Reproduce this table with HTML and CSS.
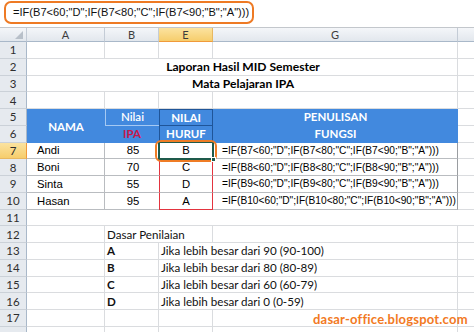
FILE: index.html
```html
<!DOCTYPE html>
<html>
<head>
<meta charset="utf-8">
<link rel="stylesheet" href="styles.css">
</head>
<body>
<div class="fbar"><div class="fbox">=IF(B7&lt;60;"D";IF(B7&lt;80;"C";IF(B7&lt;90;"B";"A")))</div></div>
<div class="sheet">
  <div class="ch corner"><span class="tri"></span></div><div class="ch">A</div><div class="ch">B</div><div class="ch on">E</div><div class="ch">G</div><div class="ch last"></div>

  <div class="rh">1</div><div class="c"></div><div class="c"></div><div class="c"></div><div class="c"></div><div class="c h"></div>
  <div class="rh">2</div><div class="c title">Laporan Hasil MID Semester</div><div class="c h"></div>
  <div class="rh">3</div><div class="c title">Mata Pelajaran IPA</div><div class="c h"></div>
  <div class="rh">4</div><div class="c"></div><div class="c"></div><div class="c"></div><div class="c"></div><div class="c h"></div>

  <div class="rh">5</div><div class="c blue nama">NAMA</div><div class="c blue b5">Nilai</div><div class="c blue e5">NILAI</div><div class="c blue">PENULISAN</div><div class="c h"></div>
  <div class="rh">6</div><div class="c blue b6">IPA</div><div class="c blue e6">HURUF</div><div class="c blue">FUNGSI</div><div class="c h"></div>

  <div class="rh on">7</div><div class="c d name">Andi</div><div class="c d num">85</div><div class="c d grade sel"><span class="handle"></span>B</div><div class="c d fx">=IF(B7&lt;60;"D";IF(B7&lt;80;"C";IF(B7&lt;90;"B";"A")))</div><div class="c h"></div>
  <div class="rh">8</div><div class="c d name">Boni</div><div class="c d num">70</div><div class="c d grade red">C</div><div class="c d fx">=IF(B8&lt;60;"D";IF(B8&lt;80;"C";IF(B8&lt;90;"B";"A")))</div><div class="c h"></div>
  <div class="rh">9</div><div class="c d name">Sinta</div><div class="c d num">55</div><div class="c d grade red">D</div><div class="c d fx">=IF(B9&lt;60;"D";IF(B9&lt;80;"C";IF(B9&lt;90;"B";"A")))</div><div class="c h"></div>
  <div class="rh">10</div><div class="c d name">Hasan</div><div class="c d num">95</div><div class="c d grade red last-red">A</div><div class="c d fx">=IF(B10&lt;60;"D";IF(B10&lt;80;"C";IF(B10&lt;90;"B";"A")))</div><div class="c h"></div>

  <div class="rh">11</div><div class="c blank"></div><div class="c h"></div>
  <div class="rh">12</div><div class="c"></div><div class="c cal span2">Dasar Penilaian</div><div class="c"></div><div class="c h"></div>
  <div class="rh">13</div><div class="c"></div><div class="c cal bold">A</div><div class="c cal span2">Jika lebih besar dari 90 (90-100)</div><div class="c h"></div>
  <div class="rh">14</div><div class="c"></div><div class="c cal bold">B</div><div class="c cal span2">Jika lebih besar dari 80 (80-89)</div><div class="c h"></div>
  <div class="rh">15</div><div class="c"></div><div class="c cal bold">C</div><div class="c cal span2">Jika lebih besar dari 60 (60-79)</div><div class="c h"></div>
  <div class="rh">16</div><div class="c"></div><div class="c cal bold">D</div><div class="c cal span2">Jika lebih besar dari 0 (0-59)</div><div class="c h"></div>
  <div class="rh">17</div><div class="c"></div><div class="c"></div><div class="c"></div><div class="c"></div><div class="c h"></div>
  <div class="rh"></div><div class="c"></div><div class="c"></div><div class="c"></div><div class="c"></div><div class="c h"></div>
</div>
<div class="ring"></div>
<div class="watermark">dasar-office.blogspot.com</div>
</body>
</html>
```

FILE: styles.css
```css
* { box-sizing: border-box; margin: 0; padding: 0; }
html, body { width: 474px; height: 332px; overflow: hidden; background: #fff; }
body { position: relative; font-family: "Liberation Sans", Arial, sans-serif; color: #000; }

.fbar { height: 28px; border-bottom: 1px solid #c3c7cc; padding: 1px 0 0 4px; }
.fbox {
  width: 250px; height: 23px;
  border: 2px solid #ee7a24; border-radius: 7px;
  font-size: 11.1px; line-height: 19px; padding-left: 7px;
  white-space: nowrap; color: #111;
}

.sheet {
  display: grid;
  grid-template-columns: 27px 78px 54px 54px 245px 16px;
  grid-template-rows: 14px repeat(18, 16.75px);
}

.ch {
  background: linear-gradient(#f4f6f9, #e2e7ed);
  border-right: 1px solid #c4ccd6;
  border-bottom: 1px solid #a9b8c9;
  display: flex; align-items: center; justify-content: center;
  font-family: Lato, "Open Sans", sans-serif; font-size: 11px; color: #3c3c3c;
}
.ch.on { background: linear-gradient(#fbe3a0, #f6cd6c); border-bottom-color: #f09a3a; border-right-color: #e8b860; }
.ch.last { border-right: none; }
.corner { position: relative; }
.tri {
  position: absolute; right: 3px; bottom: 2px;
  width: 0; height: 0;
  border-left: 8px solid transparent; border-bottom: 8px solid #b8c0c9;
}

.rh {
  background: #e6eaef;
  border-right: 1px solid #a9b8c9;
  border-bottom: 1px solid #cbd1d8;
  display: flex; align-items: center; justify-content: center;
  font-family: Lato, "Open Sans", sans-serif; font-size: 11.5px; color: #2e2e2e;
}
.rh.on { background: linear-gradient(#fbe3a0, #f6cd6c); border-right-color: #f09a3a; border-bottom-color: #e8b860; }

.c {
  border-right: 1px solid #dadcdf;
  border-bottom: 1px solid #dadcdf;
  display: flex; align-items: center;
  white-space: nowrap; overflow: hidden;
  font-size: 11px;
}
.c.h { border-right: none; }

.title {
  grid-column: span 4;
  justify-content: center;
  font-family: Lato, "Open Sans", sans-serif; font-weight: 700; font-size: 12.1px;
  padding-left: 2px;
}

.blue {
  background: #4289de; color: #fff;
  border-color: #4289de; border-right: none;
  justify-content: center;
  font-family: Lato, "Open Sans", sans-serif; font-weight: 700; font-size: 11.5px;
}
.nama { grid-row: span 2; border-bottom: none; padding-top: 1px; }
.b5 { border-left: 1px solid #a5c9f3; border-bottom: 1px solid #a5c9f3; font-weight: 600; }
.b6 { color: #c8174a; border-bottom-color: #4289de; }
.e5 { border: 1px solid #1f5599; }
.e6 { border: 1px solid #1f5599; border-top: none; }

.d { border-color: #b9bcc0; }
.name { padding-left: 10px; font-size: 11.3px; }
.num { justify-content: center; border-right: none; padding-left: 2px; font-size: 11.3px; }
.grade { justify-content: center; font-size: 11.3px; }
.red { border-left: 1px solid #e3343f; border-right: 1px solid #e3343f; }
.last-red { border-bottom: 1px solid #e3343f; }
.fx { padding-left: 9px; font-size: 10.2px; border-right-color: #9a9da1; }
.sel { position: relative; overflow: visible; border-left: 1px solid #b9bcc0; }
.sel::after {
  content: ""; position: absolute;
  left: -2px; top: -2px; right: -2px; bottom: -2px;
  border: 2px solid #1e5a4b;
}
.handle {
  position: absolute; right: -4px; bottom: -4px; width: 5px; height: 5px;
  background: #1e5a4b; border: 1px solid #fff; z-index: 2;
}

.blank { grid-column: span 4; border-right: none; }
.span2 { grid-column: span 2; }
.cal { font-family: Lato, "Open Sans", sans-serif; font-size: 11.6px; padding-left: 2px; color: #111; }
.bold { font-weight: 700; }

.ring {
  position: absolute; left: 155px; top: 140px; width: 62px; height: 22px;
  border: 2.5px solid #ef7c25; border-radius: 6px;
}
.watermark {
  position: absolute; left: 313px; top: 311px;
  font-family: Lato, "Open Sans", sans-serif; font-weight: 700; font-size: 13px;
  color: #f27a1f; letter-spacing: 0.2px;
}
```
